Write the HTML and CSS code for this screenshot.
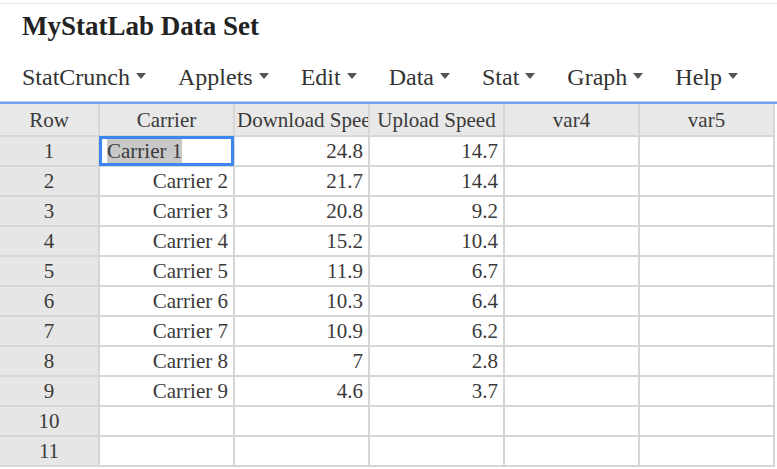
FILE: index.html
```html
<!DOCTYPE html>
<html lang="en">
<head>
  <meta charset="UTF-8" />
  <title>MyStatLab Data Set</title>
  <link rel="stylesheet" href="styles.css">
</head>
<body>
  <div class="top-line"></div>
  <h1 class="title">MyStatLab Data Set</h1>
  <nav class="menu">
    <span class="menu-item">StatCrunch<span class="caret"></span></span>
    <span class="menu-item">Applets<span class="caret"></span></span>
    <span class="menu-item">Edit<span class="caret"></span></span>
    <span class="menu-item">Data<span class="caret"></span></span>
    <span class="menu-item">Stat<span class="caret"></span></span>
    <span class="menu-item">Graph<span class="caret"></span></span>
    <span class="menu-item">Help<span class="caret"></span></span>
  </nav>
  <div class="menu-rule"></div>

  <div class="sheet">
    <div class="cell head">Row</div>
    <div class="cell head">Carrier</div>
    <div class="cell head">Download Speed</div>
    <div class="cell head">Upload Speed</div>
    <div class="cell head">var4</div>
    <div class="cell head">var5</div>
  </div>

  <script>
    const data = [
      ['Carrier 1', '24.8', '14.7'],
      ['Carrier 2', '21.7', '14.4'],
      ['Carrier 3', '20.8', '9.2'],
      ['Carrier 4', '15.2', '10.4'],
      ['Carrier 5', '11.9', '6.7'],
      ['Carrier 6', '10.3', '6.4'],
      ['Carrier 7', '10.9', '6.2'],
      ['Carrier 8', '7', '2.8'],
      ['Carrier 9', '4.6', '3.7']
    ];
    const sheet = document.querySelector('.sheet');

    function addCell(text, cls) {
      const el = document.createElement('div');
      el.className = 'cell ' + cls;
      el.textContent = text;
      sheet.appendChild(el);
      return el;
    }

    for (let i = 0; i < 11; i++) {
      const row = data[i] || ['', '', ''];
      addCell(i + 1, 'row-num');
      const carrier = addCell(i === 0 ? '' : row[0], 'value');
      if (i === 0) {
        carrier.classList.add('selected');
        const sel = document.createElement('span');
        sel.className = 'selection';
        sel.textContent = row[0];
        carrier.appendChild(sel);
      }
      addCell(row[1], 'value');
      addCell(row[2], 'value');
      addCell('', 'value');
      addCell('', 'value');
    }
  </script>
</body>
</html>
```

FILE: styles.css
```css
body {
  margin: 0;
  font-family: "Liberation Serif", "Times New Roman", serif;
  background-color: #fff;
  color: #333;
  width: 777px;
  height: 469px;
  overflow: hidden;
}

.top-line {
  height: 1px;
  margin-top: 3px;
  background-color: #e6e6e6;
}

.title {
  margin: 7px 0 0;
  padding-left: 22px;
  font-size: 27px;
  line-height: 30px;
  font-weight: bold;
  color: #222;
}

.menu {
  display: flex;
  margin-top: 21px;
  padding-left: 22px;
  font-size: 24px;
  line-height: 30px;
  color: #333;
  gap: 32px;
}

.caret {
  display: inline-block;
  width: 0;
  height: 0;
  margin-left: 6px;
  border-left: 5px solid transparent;
  border-right: 5px solid transparent;
  border-top: 6px solid #555;
  vertical-align: 6px;
}

.menu-rule {
  margin-top: 9px;
  height: 1px;
  border-bottom: 2px solid #76a4ec;
  background-color: #b8d0f3;
}

.sheet {
  display: grid;
  grid-template-columns: 98px repeat(5, 133px);
  grid-template-rows: 31px;
  grid-auto-rows: 28px;
  gap: 2px;
  padding: 0 2px 2px 0;
  width: 773px;
  background-color: #d6d6d6;
  font-size: 21px;
  color: #3a3a3a;
}

.cell {
  background-color: #fff;
  line-height: 28px;
  white-space: nowrap;
  overflow: hidden;
}

.head.cell {
  padding: 2px 2px 0;
  background-color: #e8e8e8;
  text-align: center;
  line-height: 29px;
}

.row-num {
  background-color: #e6e6e6;
  text-align: center;
}

.value {
  text-align: right;
  padding-right: 5px;
}

.selected {
  text-align: left;
  padding-left: 7px;
  outline: 3px solid #3d86f0;
  outline-offset: -2px;
}

.selection {
  background-color: #c8c8c8;
}
```
